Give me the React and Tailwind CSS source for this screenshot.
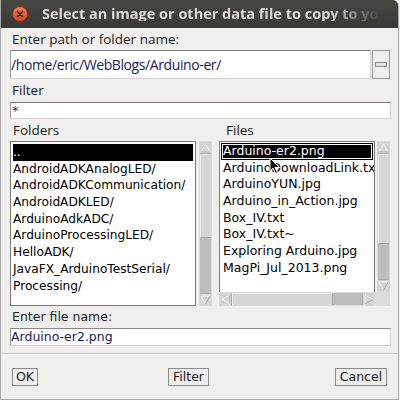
import React from "react";

const awt = { fontFamily: '"DejaVu Sans", sans-serif' };
const gtk = { fontFamily: '"Open Sans", "DejaVu Sans", sans-serif' };

function ArrowUp() {
  return (
    <div className="h-[12px] w-full bg-[#d4d4d4] border-b border-[#b0b0b0] flex items-center justify-center">
      <svg width="11" height="10" viewBox="0 0 11 10">
        <polygon points="5.5,1 10,9 1,9" fill="#d4d4d4" stroke="#f4f4f4" strokeWidth="1" />
        <line x1="1" y1="9" x2="10" y2="9" stroke="#a8a8a8" />
      </svg>
    </div>
  );
}
function ArrowDown() {
  return (
    <div className="h-[12px] w-full bg-[#d4d4d4] border-t border-[#b0b0b0] flex items-center justify-center">
      <svg width="11" height="10" viewBox="0 0 11 10">
        <polygon points="1,1 10,1 5.5,9" fill="#d4d4d4" stroke="#f4f4f4" strokeWidth="1" />
        <line x1="10" y1="1" x2="5.5" y2="9" stroke="#a8a8a8" />
      </svg>
    </div>
  );
}
function ArrowLeft() {
  return (
    <div className="w-[12px] h-full bg-[#d4d4d4] border-r border-[#b0b0b0] flex items-center justify-center">
      <svg width="10" height="11" viewBox="0 0 10 11">
        <polygon points="1,5.5 9,1 9,10" fill="#d4d4d4" stroke="#f4f4f4" strokeWidth="1" />
        <line x1="9" y1="1" x2="9" y2="10" stroke="#a8a8a8" />
      </svg>
    </div>
  );
}
function ArrowRight() {
  return (
    <div className="w-[12px] h-full bg-[#d4d4d4] border-l border-[#b0b0b0] flex items-center justify-center">
      <svg width="10" height="11" viewBox="0 0 10 11">
        <polygon points="1,1 9,5.5 1,10" fill="#d4d4d4" stroke="#f4f4f4" strokeWidth="1" />
        <line x1="9" y1="5.5" x2="1" y2="10" stroke="#a8a8a8" />
      </svg>
    </div>
  );
}

function VScroll({ thumbTop, thumbH, className }) {
  return (
    <div className={"w-[13px] flex flex-col bg-[#bdbdbd] border border-[#dadada] " + className}>
      <ArrowUp />
      <div className="flex-1 relative">
        <div
          className="absolute left-0 right-0 bg-[#d6d6d6] border-t border-l border-[#ececec] border-b border-b-[#a8a8a8]"
          style={{ top: thumbTop, height: thumbH }}
        />
      </div>
      <ArrowDown />
    </div>
  );
}

const folders = [
  "..",
  "AndroidADKAnalogLED/",
  "AndroidADKCommunication/",
  "AndroidADKLED/",
  "ArduinoAdkADC/",
  "ArduinoProcessingLED/",
  "HelloADK/",
  "JavaFX_ArduinoTestSerial/",
  "Processing/",
];
const files = [
  "Arduino-er2.png",
  "ArduinoDownloadLink.txt",
  "ArduinoYUN.jpg",
  "Arduino_in_Action.jpg",
  "Box_IV.txt",
  "Box_IV.txt~",
  "Exploring Arduino.jpg",
  "MagPi_Jul_2013.png",
];

function AwtButton({ children, className }) {
  return (
    <div
      className={
        "h-[18px] bg-[#efefef] border border-[#8a8a8a] flex items-center justify-center text-[12.5px] text-[#222] leading-none " +
        className
      }
      style={awt}
    >
      {children}
    </div>
  );
}

export default function App() {
  return (
    <div className="w-[400px] h-[400px] bg-[#f3f3f3] overflow-hidden relative">
      <div className="w-[399px] h-[400px] bg-[#f0efee] border-l border-r border-b border-[#a9a9a9] flex flex-col rounded-tr-[6px] overflow-hidden">
        {/* title bar */}
        <div className="h-[28px] shrink-0 bg-gradient-to-b from-[#484742] to-[#3a3935] flex items-center pl-[11px] relative">
          <div className="w-[16px] h-[16px] rounded-full bg-gradient-to-b from-[#f07a4f] to-[#d24a20] border border-[#8e3418] flex items-center justify-center">
            <svg width="8" height="8" viewBox="0 0 8 8">
              <path d="M1.5 1.5 L6.5 6.5 M6.5 1.5 L1.5 6.5" stroke="#3a1a10" strokeWidth="1.6" strokeLinecap="round" />
            </svg>
          </div>
          <div
            className="ml-[14px] text-[14.5px] font-bold text-[#dfdbd2] whitespace-nowrap overflow-hidden w-[338px] leading-none"
            style={{
              ...gtk,
              WebkitMaskImage: "linear-gradient(to right, black 85%, transparent 100%)",
              maskImage: "linear-gradient(to right, black 85%, transparent 100%)",
            }}
          >
            Select an image or other data file to copy to your sketch
          </div>
        </div>

        <div className="flex flex-col pl-[9px] pr-[8px]">
          <div className="h-[22px] flex items-center pl-[2px] text-[13.5px] text-[#222]" style={gtk}>
            Enter path or folder name:
          </div>
          <div className="h-[29px] flex gap-[1px]">
            <div className="w-[362px] bg-white border border-[#d2d2d2] border-t-[#7b7b7b] border-l-[#a0a0a0] flex items-center text-[14px] tracking-[-0.4px] text-[#1c1a5a] whitespace-nowrap overflow-hidden" style={gtk}>
              /home/eric/WebBlogs/Arduino-er/
            </div>
            <div className="w-[18px] bg-[#efefef] border border-[#9a9a9a] flex items-center justify-center">
              <div className="w-[12px] h-[5px] border border-[#8a8a8a] bg-[#e4e4e4]" />
            </div>
          </div>
          <div className="h-[23px] flex items-center pl-[2px] text-[13.5px] text-[#222]" style={gtk}>
            Filter
          </div>
          <div className="h-[17px] w-[381px] bg-white border border-[#d2d2d2] border-t-[#7b7b7b] border-l-[#a0a0a0] flex items-center text-[13px] text-[#4a1a7a] leading-none pl-[1px]" style={awt}>
            *
          </div>
          <div className="h-[22px] flex items-center text-[13.5px] text-[#222]" style={gtk}>
            <div className="w-[210px] pl-[3px]">Folders</div>
            <div className="pl-[6px]">Files</div>
          </div>

          {/* lists */}
          <div className="h-[165px] flex">
            <div className="w-[186px] bg-white border border-[#7a7a7a] px-[2px] pt-[2px] overflow-hidden" style={awt}>
              {folders.map((f, i) => (
                <div
                  key={f}
                  className={
                    "h-[16.7px] leading-[16px] text-[12.2px] whitespace-nowrap " +
                    (i === 0 ? "bg-black text-white" : "text-black")
                  }
                >
                  {f}
                </div>
              ))}
            </div>
            <VScroll thumbTop={0} thumbH={84} className="ml-[3px]" />
            <div className="ml-[7px] flex flex-col">
              <div className="flex h-[151px]">
                <div className="w-[156px] bg-white border border-[#7a7a7a] border-b-0 px-[1px] pt-[1px] overflow-hidden" style={awt}>
                  {files.map((f, i) => (
                    <div
                      key={f}
                      className={
                        "h-[16.7px] leading-[14px] text-[12.5px] whitespace-nowrap pl-[1px] " +
                        (i === 0
                          ? "bg-black text-white border border-black outline outline-1 outline-offset-[-2px] outline-white"
                          : "text-black border border-transparent")
                      }
                    >
                      {f}
                    </div>
                  ))}
                </div>
                <VScroll thumbTop={0} thumbH={90} className="ml-[2px]" />
              </div>
              <div className="flex h-[14px]">
                <div className="w-[156px] flex bg-[#bdbdbd] border border-[#dadada]">
                  <ArrowLeft />
                  <div className="flex-1 relative">
                    <div className="absolute top-0 bottom-0 left-0 w-[101px] bg-[#d6d6d6] border-t border-l border-[#ececec] border-r border-r-[#a8a8a8]" />
                  </div>
                  <ArrowRight />
                </div>
                <div className="w-[15px] bg-[#dcdcdc]" />
              </div>
            </div>
          </div>

          <div className="h-[22px] flex items-center pl-[2px] text-[12.5px] text-[#222]" style={awt}>
            Enter file name:
          </div>
          <div className="h-[18px] w-[381px] bg-white border border-[#d2d2d2] border-t-[#8a8a8a] border-l-[#a0a0a0] flex items-center text-[12.5px] text-[#1c1a5a] leading-none" style={awt}>
            Arduino-er2.png
          </div>
        </div>

        <div className="mt-[7px] h-[1px] bg-[#c6c6c6]" />
        <div className="h-[1px] bg-[#fafafa]" />

        <div className="mt-[13px] flex items-center px-[11px]">
          <AwtButton className="w-[26px]">OK</AwtButton>
          <div className="flex-1 flex justify-center pl-[4px]">
            <AwtButton className="w-[41px]">Filter</AwtButton>
          </div>
          <AwtButton className="w-[52px]">Cancel</AwtButton>
        </div>
      </div>

      {/* mouse cursor */}
      <svg className="absolute left-[269px] top-[157px]" width="13" height="18" viewBox="0 0 13 18">
        <path d="M1 1 L1 14 L4 11 L6.5 16.5 L8.5 15.5 L6 10.5 L10.5 10.5 Z" fill="#111" stroke="#fff" strokeWidth="1" strokeLinejoin="round" />
      </svg>
    </div>
  );
}
